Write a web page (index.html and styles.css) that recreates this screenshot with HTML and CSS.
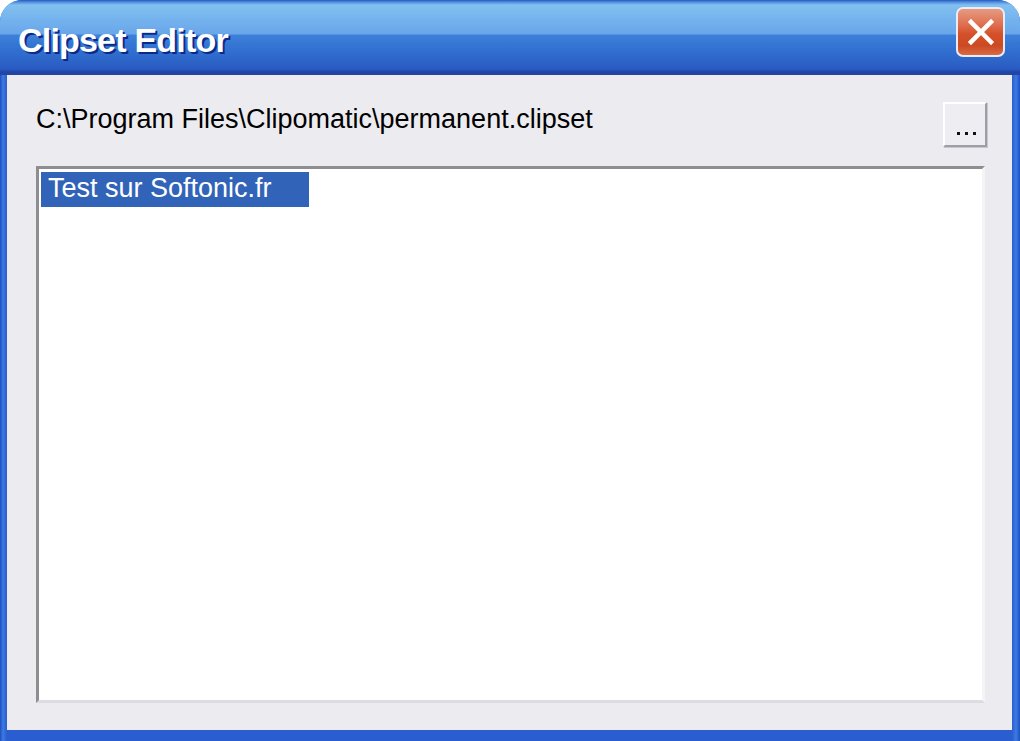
FILE: index.html
```html
<!DOCTYPE html>
<html lang="fr">
<head>
  <meta charset="UTF-8">
  <title>Clipset Editor</title>
  <link rel="stylesheet" href="styles.css">
</head>
<body>
  <div class="window">
    <div class="titlebar">
      <span class="title">Clipset Editor</span>
      <button class="close" type="button">
        <svg width="30" height="30" viewBox="0 0 30 30">
          <path d="M5 5 L25 25 M25 5 L5 25" stroke="#ffffff" stroke-width="4.5" stroke-linecap="square"/>
        </svg>
      </button>
    </div>
    <div class="content">
      <div class="path-row">
        <span class="path">C:\Program Files\Clipomatic\permanent.clipset</span>
        <button class="browse" type="button"><span class="dot"></span><span class="dot"></span><span class="dot"></span></button>
      </div>
      <div class="listbox">
        <div class="item selected">Test sur Softonic.fr</div>
      </div>
    </div>
  </div>
</body>
</html>
```

FILE: styles.css
```css
body {
  margin: 0;
  background: #ffffff;
  font-family: "Liberation Sans", Arial, sans-serif;
}
.window {
  width: 1020px;
  height: 741px;
  box-sizing: border-box;
  display: flex;
  flex-direction: column;
  background: linear-gradient(to right, #1d4fc2 0px, #3c7be0 3px, #2a5dd0 7px, #2a5dd0 1012px, #3c7be0 1016px, #1d4fc2 1020px);
  border-radius: 22px 22px 0 0;
  padding: 0 8px 11px 7px;
}
.titlebar {
  height: 75px;
  margin: 0 -8px 0 -7px;
  padding: 0 15px 0 18px;
  display: flex;
  align-items: center;
  justify-content: space-between;
  border-radius: 22px 22px 0 0;
  background: linear-gradient(to bottom, #2a55bc 0px, #4d8de0 2px, #82c0ef 5px, #74b2ee 20px, #69a6ea 34px, #3d80d8 35px, #3170d0 50px, #2a5bc2 69px, #1f45a8 72px, #23459e 75px);
}
.title {
  color: #ffffff;
  font-weight: bold;
  font-size: 34px;
  letter-spacing: -0.8px;
  text-shadow: 2px 2px 0 #0a2a8a;
  margin-top: 6px;
}
.close {
  width: 49px;
  height: 50px;
  margin-top: -12px;
  border: 2px solid #e8ecf6;
  border-radius: 7px;
  padding: 0;
  display: flex;
  align-items: center;
  justify-content: center;
  background: linear-gradient(to bottom, #e69a80 0%, #e07456 30%, #d4502a 55%, #cc4a22 80%, #d86a45 100%);
}
.content {
  flex: 1;
  background: #ecebef;
  padding: 27px 25px 27px 29px;
  display: flex;
  flex-direction: column;
  gap: 19px;
}
.path-row {
  display: flex;
  align-items: center;
  justify-content: space-between;
  height: 45px;
}
.path {
  font-size: 27px;
  color: #000000;
  margin-top: -10px;
}
.browse {
  width: 44px;
  height: 45px;
  padding: 0 0 10px 2px;
  background: #eeedf1;
  border: 2px solid;
  border-color: #ffffff #9f9da5 #9f9da5 #ffffff;
  box-shadow: 1px 1px 0 #c8c6cc;
  display: flex;
  align-items: flex-end;
  justify-content: center;
  gap: 5px;
}
.dot {
  width: 3px;
  height: 3px;
  background: #111111;
}
.listbox {
  flex: 1;
  margin-right: 2px;
  background: #ffffff;
  border: 3px solid;
  border-color: #8e8d92 #f4f4f6 #dcdce2 #8e8d92;
  padding: 3px 2px;
}
.item {
  width: 268px;
  height: 35px;
  box-sizing: border-box;
  padding-left: 7px;
  font-size: 27px;
  line-height: 33px;
}
.selected {
  background: #3164b8;
  color: #ffffff;
}
```
